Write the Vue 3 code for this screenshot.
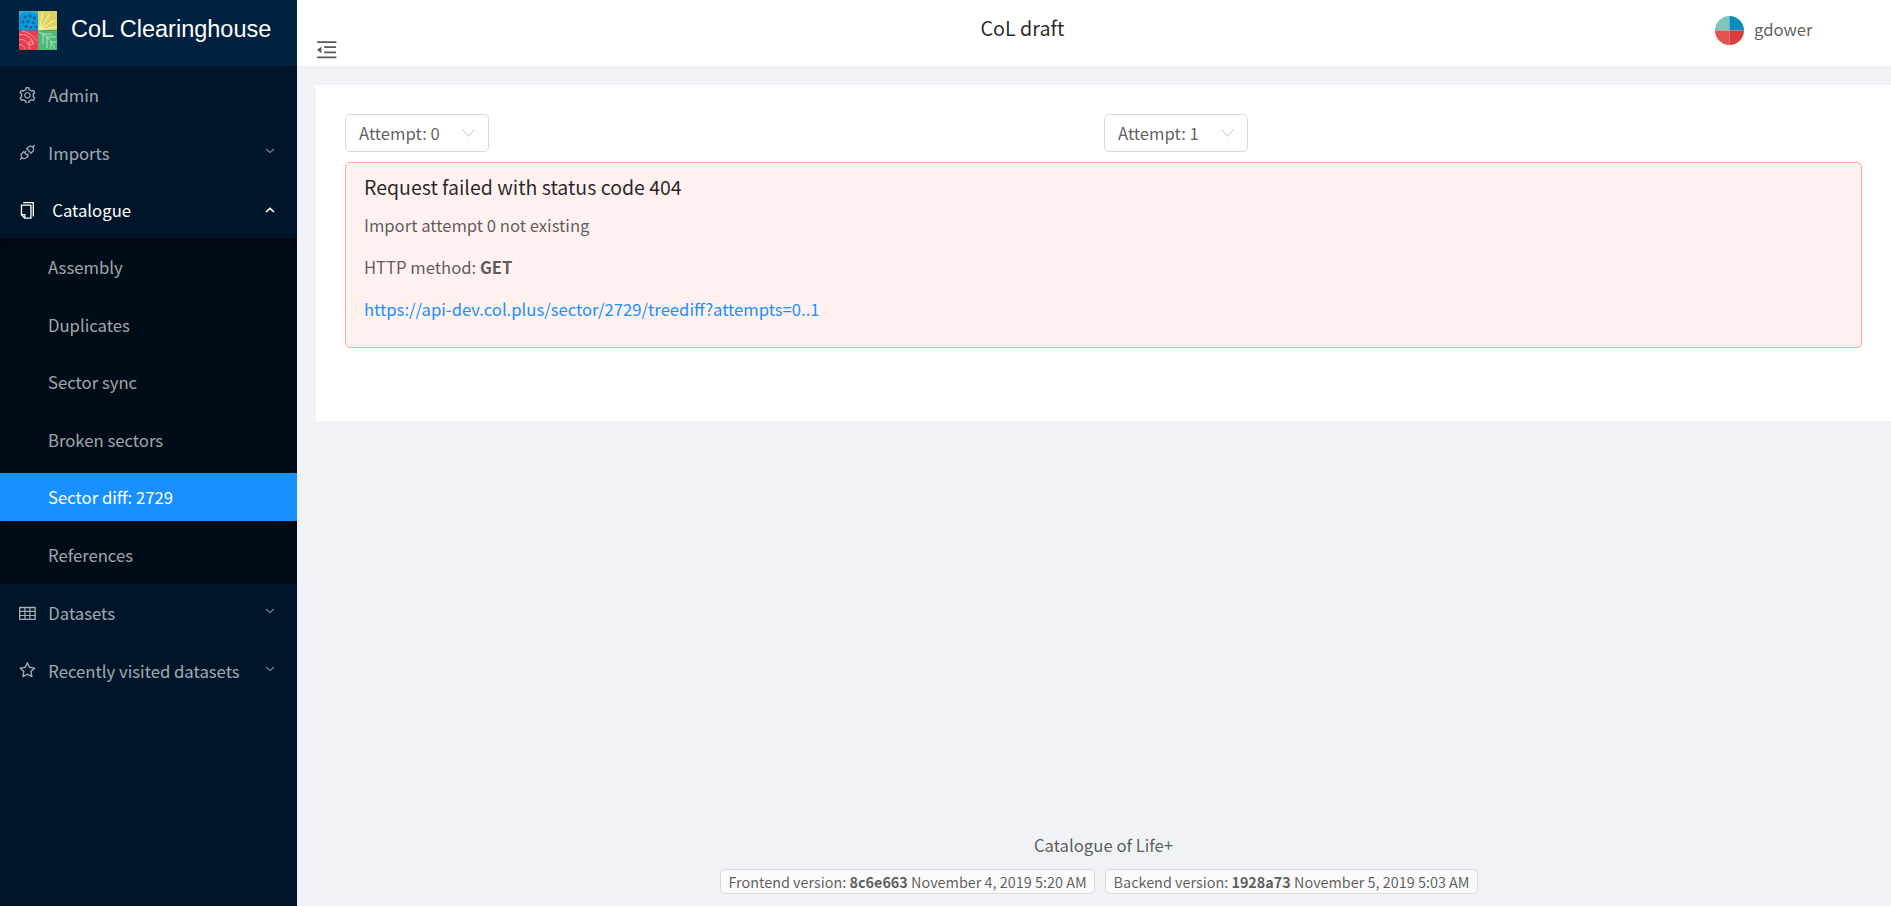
<script setup>
const subs = [
  { label: 'Assembly' },
  { label: 'Duplicates' },
  { label: 'Sector sync' },
  { label: 'Broken sectors' },
  { label: 'Sector diff: 2729', active: true },
  { label: 'References' },
]
</script>

<template>
  <div class="layout">
    <aside class="sider">
      <div class="brand">
        <svg class="logo" viewBox="0 0 38 39" width="38" height="39">
          <rect x="0" y="0" width="19" height="19.5" fill="#35b0c9" />
          <path d="M0 4C5 0 14 0 19 4V19.5H0z" fill="#0e98dc" />
          <g fill="#0d5f94">
            <circle cx="6" cy="6" r="1.500" /><circle cx="11" cy="5" r="1.500" /><circle cx="15.500" cy="7" r="1.500" />
            <circle cx="4" cy="11" r="1.500" /><circle cx="9" cy="10.500" r="1.500" /><circle cx="14" cy="12" r="1.500" />
            <circle cx="7" cy="15.500" r="1.500" /><circle cx="12" cy="16.500" r="1.500" /><circle cx="17" cy="16" r="1.200" />
          </g>
          <rect x="19" y="0" width="19" height="19.5" fill="#dcd25f" />
          <g stroke="#f3eda0" stroke-width="1.300">
            <path d="M20 19L24 1M20 19L31 3M20 19L36 9M20 19L38 16" />
          </g>
          <rect x="0" y="19.500" width="19" height="19.500" fill="#ec3d50" />
          <g fill="none" stroke="#f7a0a2" stroke-width="1">
            <path d="M0 24C6 22 12 26 15 33M0 29C4 27 9 30 11 38M3 20C9 21 15 25 18 30M0 34C3 33 5 35 6 38" />
            <circle cx="12" cy="32" r="2" />
          </g>
          <rect x="19" y="19.500" width="19" height="19.500" fill="#4bb97a" />
          <g fill="none" stroke="#bfe8c4" stroke-width="0.900">
            <path d="M20 21C27 24 33 30 36 38M24 23V33M28 26V37M32 31V38M24 23H33M28 26H37M32 31H38" />
          </g>
        </svg>
        <span class="brand-name">CoL Clearinghouse</span>
      </div>

      <nav class="menu">
        <div class="item">
          <svg class="ico" viewBox="64 64 896 896" fill="currentColor"><path d="M924.8 625.7l-65.5-56c3.1-19 4.700-38.400 4.700-57.800s-1.600-38.800-4.700-57.800l65.500-56a32.030 32.030 0 0 0 9.300-35.200l-.9-2.600a443.740 443.740 0 0 0-79.700-137.900l-1.800-2.100a32.120 32.120 0 0 0-35.100-9.500l-81.300 28.900c-30-24.600-63.500-44-99.700-57.600l-15.700-85a32.050 32.050 0 0 0-25.800-25.700l-2.700-.5c-52.100-9.400-106.900-9.400-159 0l-2.700.5a32.050 32.050 0 0 0-25.800 25.700l-15.800 85.400a351.860 351.860 0 0 0-99 57.400l-81.900-29.100a32 32 0 0 0-35.100 9.500l-1.800 2.100a446.020 446.020 0 0 0-79.700 137.900l-.9 2.600c-4.500 12.500-.8 26.500 9.300 35.200l66.300 56.600c-3.100 18.800-4.600 38-4.600 57.100 0 19.200 1.500 38.400 4.600 57.100L99 625.500a32.030 32.030 0 0 0-9.300 35.200l.9 2.600c18.100 50.400 44.900 96.900 79.700 137.900l1.800 2.100a32.120 32.120 0 0 0 35.100 9.500l81.900-29.100c29.800 24.500 63.100 43.900 99 57.400l15.800 85.400a32.050 32.050 0 0 0 25.800 25.700l2.700.5a449.400 449.400 0 0 0 159 0l2.700-.5a32.050 32.050 0 0 0 25.800-25.700l15.700-85a350 350 0 0 0 99.700-57.600l81.300 28.900a32 32 0 0 0 35.100-9.500l1.800-2.100c34.800-41.100 61.600-87.500 79.700-137.900l.9-2.600c4.500-12.300.8-26.300-9.300-35zM788.300 465.900c2.500 15.100 3.800 30.600 3.800 46.100s-1.300 31-3.800 46.100l-6.600 40.100 74.700 63.900a370.030 370.030 0 0 1-42.600 73.600L721 702.800l-31.400 25.800c-23.900 19.600-50.500 35-79.300 45.800l-38.100 14.300-17.900 97a377.500 377.500 0 0 1-85 0l-17.900-97.200-37.800-14.500c-28.500-10.800-55-26.200-78.700-45.700l-31.400-25.900-93.400 33.200c-17-22.900-31.200-47.600-42.600-73.600l75.500-64.500-6.500-40c-2.400-14.900-3.700-30.300-3.700-45.500 0-15.300 1.200-30.600 3.700-45.500l6.500-40-75.500-64.500c11.300-26.100 25.600-50.700 42.600-73.600l93.400 33.200 31.400-25.900c23.700-19.500 50.200-34.900 78.700-45.700l37.900-14.300 17.900-97.200c28.100-3.200 56.800-3.200 85 0l17.900 97 38.100 14.300c28.700 10.800 55.400 26.200 79.300 45.800l31.400 25.800 92.800-32.900c17 22.900 31.200 47.600 42.600 73.600L781.800 426l6.500 39.900zM512 326c-97.200 0-176 78.800-176 176s78.800 176 176 176 176-78.800 176-176-78.800-176-176-176zm79.200 255.200A111.600 111.600 0 0 1 512 614c-29.900 0-58-11.700-79.200-32.800A111.600 111.600 0 0 1 400 502c0-29.900 11.700-58 32.800-79.200C454 401.600 482.100 390 512 390c29.900 0 58 11.600 79.200 32.800A111.600 111.600 0 0 1 624 502c0 29.900-11.700 58-32.800 79.200z" /></svg>
          <span>Admin</span>
        </div>
        <div class="item">
          <svg class="ico" viewBox="64 64 896 896" fill="currentColor"><path d="M917.700 148.800l-42.400-42.400c-1.600-1.600-3.600-2.300-5.700-2.300s-4.100.8-5.700 2.300l-76.100 76.100a199.270 199.270 0 0 0-112.100-34.300c-51.200 0-102.400 19.500-141.500 58.600L432.300 308.700a8.030 8.030 0 0 0 0 11.300L704 591.700c1.600 1.600 3.600 2.300 5.700 2.300 2 0 4.100-.8 5.700-2.300l101.900-101.900c68.900-69 77-175.700 24.300-253.500l76.100-76.100c3.100-3.200 3.100-8.300 0-11.400zM769.100 441.700l-59.400 59.400-186.800-186.800 59.400-59.400c24.900-24.900 58.100-38.700 93.400-38.700 35.300 0 68.400 13.700 93.400 38.700 24.900 24.900 38.700 58.100 38.700 93.400 0 35.300-13.800 68.400-38.700 93.400zm-190.200 105a8.030 8.030 0 0 0-11.300 0L501 613.300 410.700 523l66.700-66.700c3.100-3.100 3.100-8.200 0-11.300L441 408.600a8.030 8.030 0 0 0-11.300 0L363 475.300l-43-43a7.850 7.850 0 0 0-5.700-2.300c-2 0-4.100.8-5.700 2.300L206.800 534.200c-68.900 69-77 175.700-24.300 253.500l-76.100 76.100a8.030 8.030 0 0 0 0 11.300l42.400 42.400c1.600 1.600 3.600 2.300 5.700 2.300s4.100-.8 5.700-2.300l76.100-76.100c33.700 22.900 72.900 34.300 112.100 34.300 51.200 0 102.400-19.500 141.500-58.600l101.900-101.900c3.100-3.100 3.100-8.200 0-11.300l-36.400-36.200zM441.700 769.100a131.320 131.320 0 0 1-93.400 38.700c-35.300 0-68.400-13.700-93.400-38.700a131.320 131.320 0 0 1-38.700-93.400c0-35.300 13.700-68.400 38.700-93.400l59.400-59.400 186.800 186.800-59.400 59.400z" /></svg>
          <span>Imports</span>
          <svg class="arrow" viewBox="0 0 10 6"><path d="M1 1l4 3.600L9 1" fill="none" stroke="currentColor" stroke-width="1.400" /></svg>
        </div>
        <div class="item open">
          <svg class="ico" viewBox="64 64 896 896" fill="currentColor"><path d="M832 64H296c-4.400 0-8 3.600-8 8v56c0 4.400 3.600 8 8 8h496v688c0 4.400 3.600 8 8 8h56c4.400 0 8-3.600 8-8V96c0-17.700-14.300-32-32-32zM704 192H192c-17.700 0-32 14.300-32 32v530.700c0 8.500 3.400 16.600 9.400 22.600l173.300 173.300c2.200 2.200 4.700 4 7.400 5.500v1.900h4.200c3.500 1.300 7.200 2 11 2H704c17.700 0 32-14.300 32-32V224c0-17.700-14.300-32-32-32zM350 856.200L263.900 770H350v86.200zM664 888H414V746c0-22.100-17.900-40-40-40H232V264h432v624z" /></svg>
          <span class="open-label">Catalogue</span>
          <svg class="arrow" viewBox="0 0 10 6"><path d="M1 5l4-3.600L9 5" fill="none" stroke="currentColor" stroke-width="1.600" /></svg>
        </div>
        <div class="sub">
          <div v-for="s in subs" :key="s.label" class="sub-item" :class="{ active: s.active }">{{ s.label }}</div>
        </div>
        <div class="item">
          <svg class="ico" viewBox="64 64 896 896" fill="currentColor"><path d="M928 160H96c-17.700 0-32 14.300-32 32v640c0 17.700 14.300 32 32 32h832c17.700 0 32-14.300 32-32V192c0-17.700-14.300-32-32-32zm-40 208H676V232h212v136zm0 224H676V432h212v160zM412 432h200v160H412V432zm200-64H412V232h200v136zm-476 64h212v160H136V432zm0-200h212v136H136V232zm0 424h212v136H136V656zm276 0h200v136H412V656zm476 136H676V656h212v136z" /></svg>
          <span>Datasets</span>
          <svg class="arrow" viewBox="0 0 10 6"><path d="M1 1l4 3.600L9 1" fill="none" stroke="currentColor" stroke-width="1.400" /></svg>
        </div>
        <div class="item">
          <svg class="ico" viewBox="64 64 896 896" fill="currentColor"><path d="M908.100 353.100l-253.900-36.900L540.700 86.100c-3.100-6.300-8.200-11.400-14.500-14.500-15.800-7.800-35-1.300-42.900 14.500L369.800 316.200l-253.900 36.900c-7 1-13.400 4.300-18.300 9.300a32.050 32.050 0 0 0 .6 45.300l183.700 179.100-43.400 252.900a31.950 31.950 0 0 0 46.400 33.700L512 754l227.100 119.400c6.200 3.300 13.400 4.400 20.300 3.200 17.400-3 29.100-19.500 26.100-36.900l-43.400-252.900 183.700-179.100c5-4.900 8.300-11.300 9.300-18.300 2.700-17.500-9.500-33.700-27-36.300zM664.800 561.600l36.100 210.300L512 672.700 323.100 772l36.100-210.300-152.800-149L417.600 382 512 190.700 606.400 382l211.200 30.700-152.800 148.900z" /></svg>
          <span>Recently visited datasets</span>
          <svg class="arrow" viewBox="0 0 10 6"><path d="M1 1l4 3.600L9 1" fill="none" stroke="currentColor" stroke-width="1.400" /></svg>
        </div>
      </nav>
    </aside>

    <div class="main">
      <header class="header">
        <svg class="fold" viewBox="64 64 896 896" fill="#595959"><path d="M408 442h480c4.400 0 8-3.600 8-8v-56c0-4.400-3.600-8-8-8H408c-4.400 0-8 3.600-8 8v56c0 4.400 3.600 8 8 8zm-8 204c0 4.400 3.600 8 8 8h480c4.400 0 8-3.600 8-8v-56c0-4.400-3.600-8-8-8H408c-4.400 0-8 3.600-8 8v56zm504-486H120c-4.400 0-8 3.600-8 8v56c0 4.400 3.600 8 8 8h784c4.400 0 8-3.600 8-8v-56c0-4.400-3.600-8-8-8zm0 632H120c-4.400 0-8 3.600-8 8v56c0 4.400 3.600 8 8 8h784c4.400 0 8-3.600 8-8v-56c0-4.400-3.600-8-8-8zM115.400 518.900L271.700 642c5.800 4.600 14.400.5 14.400-6.900V388.900c0-7.400-8.500-11.500-14.400-6.900L115.400 505.100a8.740 8.740 0 0 0 0 13.800z" /></svg>
        <div class="title">CoL draft</div>
        <div class="user">
          <svg class="avatar" viewBox="0 0 30 30" width="29" height="29">
            <path d="M15 15V0a15 15 0 0 0-15 15z" fill="#82c4b8" />
            <path d="M15 15V0a15 15 0 0 1 15 15z" fill="#0a8ac0" />
            <path d="M15 15H0a15 15 0 0 0 15 15z" fill="#e25450" />
            <path d="M15 15H30a15 15 0 0 1-15 15z" fill="#db3d3c" />
          </svg>
          <span class="user-name">gdower</span>
        </div>
      </header>

      <section class="content">
        <div class="selects">
          <div class="col"><div class="select"><span>Attempt: 0</span><svg viewBox="0 0 13 8"><path d="M.5.500L6.500 7.300 12.500.5" fill="none" stroke="currentColor" stroke-width="1" /></svg></div></div>
          <div class="col"><div class="select"><span>Attempt: 1</span><svg viewBox="0 0 13 8"><path d="M.5.500L6.500 7.300 12.500.5" fill="none" stroke="currentColor" stroke-width="1" /></svg></div></div>
        </div>
        <div class="alert">
          <div class="alert-title">Request failed with status code 404</div>
          <p>Import attempt 0 not existing</p>
          <p>HTTP method: <strong>GET</strong></p>
          <p><a href="#">https://api-dev.col.plus/sector/2729/treediff?attempts=0..1</a></p>
        </div>
      </section>

      <footer class="footer">
        <div class="foot-title">Catalogue of Life+</div>
        <div class="tags">
          <span class="tag">Frontend version: <strong>8c6e663</strong> November 4, 2019 5:20 AM</span>
          <span class="tag">Backend version: <strong>1928a73</strong> November 5, 2019 5:03 AM</span>
        </div>
      </footer>
    </div>
  </div>
</template>

<style>
html, body { margin: 0; padding: 0; background: #f0f2f5; }
</style>

<style scoped>
.layout {
  display: flex;
  width: 1891px;
  height: 906px;
  overflow: hidden;
  font-family: "Noto Sans CJK SC", "Noto Sans", sans-serif;
  font-size: 16.7px;
  color: rgba(0, 0, 0, 0.65);
  background: #f0f2f5;
}
.sider {
  flex: 0 0 297px;
  background: #001529;
  color: rgba(255, 255, 255, 0.65);
}
.brand {
  height: 66px;
  background: #002140;
  display: flex;
  align-items: center;
  padding-left: 19px;
  box-sizing: border-box;
}
.logo { display: block; margin-top: -5px; }
.brand-name {
  margin-left: 14px;
  font-family: "Liberation Sans", Arial, sans-serif;
  font-size: 23.500px;
  color: #fff;
  margin-top: -8px;
}
.menu { padding-top: 5px; }
.item {
  height: 48px;
  margin-bottom: 9.600px;
  display: flex;
  align-items: center;
  padding-left: 19px;
  position: relative;
}
.ico { width: 16.800px; height: 16.800px; flex: none; margin-right: 12.500px; }
.item.open { color: #fff; margin-bottom: 3.800px; }
.open-label { margin-left: 4px; }
.arrow {
  position: absolute;
  right: 22px;
  top: 19px;
  width: 10px;
  height: 6px;
  opacity: 0.65;
}
.open .arrow { opacity: 1; top: 20.500px; }
.sub {
  background: #000c17;
  box-shadow: inset 0 2px 8px rgba(0,0,0,.45);
  margin-bottom: 5px;
  display: flex;
  flex-direction: column;
  gap: 9.600px;
  padding: 5px 0;
}
.sub-item {
  height: 48px;
  line-height: 48px;
  padding-left: 48px;
}
.sub-item.active { background: #1890ff; color: #fff; }
.main {
  flex: 1;
  min-width: 0;
  display: flex;
  flex-direction: column;
}
.header {
  height: 66px;
  background: #fff;
  display: grid;
  grid-template-columns: 683.500px 734.500px 1fr;
  align-items: start;
  flex: none;
}
.fold { width: 21.600px; height: 21.600px; margin: 39px 0 0 19px; display: block; }
.title {
  line-height: 55px;
  font-size: 19.700px;
  color: rgba(0, 0, 0, 0.85);
}
.user {
  padding-top: 16px;
  display: flex;
  align-items: center;
  gap: 10px;
  line-height: 27px;
}
.user-name { margin-top: -3px; }
.content {
  margin: 19px 0 0 19px;
  height: 336px;
  background: #fff;
  padding: 29px 29px 0;
  box-sizing: border-box;
  flex: none;
}
.selects { display: flex; margin-bottom: 10px; }
.col { flex: 0 0 759px; }
.select {
  width: 144px;
  height: 38px;
  box-sizing: border-box;
  border: 1px solid #d9d9d9;
  border-radius: 4.800px;
  display: flex;
  align-items: center;
  justify-content: space-between;
  padding: 0 13px 0 13px;
}
.select svg { width: 13px; height: 8px; color: rgba(0,0,0,.25); }
.alert {
  background: #fff1f0;
  border: 1px solid #ffa39e;
  border-radius: 4.800px;
  height: 186px;
  box-sizing: border-box;
  padding: 10px 18px;
}
.alert-title {
  font-size: 19.500px;
  line-height: 28px;
  color: rgba(0, 0, 0, 0.85);
  margin-bottom: 12px;
}
.alert p { margin: 0 0 17px; line-height: 25px; font-size: 16.650px; }
.alert strong { font-weight: 700; }
.alert a { color: #1890ff; text-decoration: none; }
.footer {
  margin-top: auto;
  text-align: center;
  height: 76px;
  flex: none;
  padding-top: 2px;
  box-sizing: border-box;
}
.foot-title { line-height: 26px; padding-left: 19px; }
.tags { display: flex; justify-content: center; gap: 10px; margin-top: 11px; padding-left: 10px; }
.tag {
  font-size: 14.400px;
  line-height: 23px;
  height: 25px;
  box-sizing: border-box;
  background: #fafafa;
  border: 1px solid #d9d9d9;
  border-radius: 4.800px;
  padding: 0 7.500px;
}
</style>
